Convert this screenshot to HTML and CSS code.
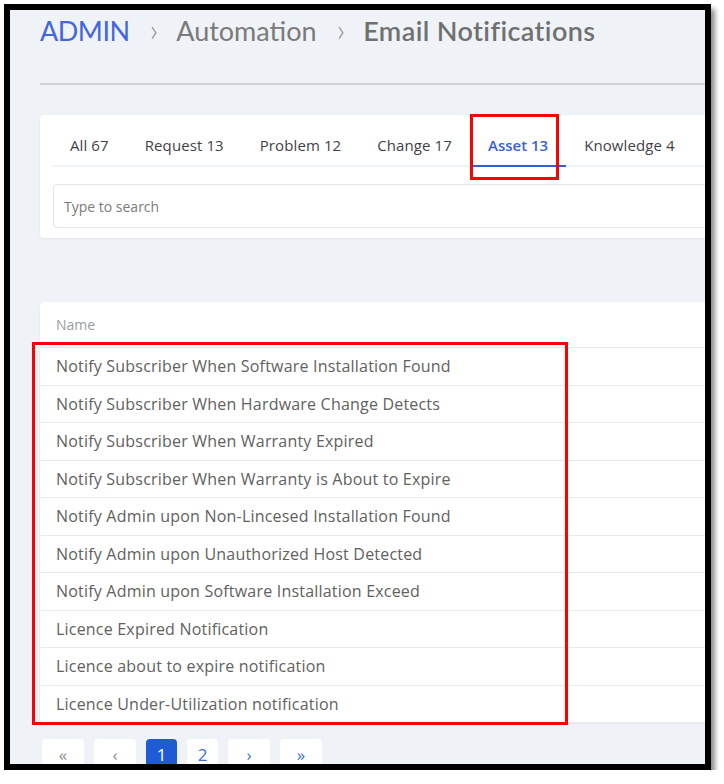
FILE: index.html
```html
<!DOCTYPE html>
<html lang="en">
  <head>
    <meta charset="UTF-8" />
    <title>Email Notifications</title>
    <link rel="stylesheet" href="styles.css">
  </head>
  <body>
    <div class="frame">
      <div class="page">
        <div class="breadcrumb">
          <span class="crumb-root">ADMIN</span>
          <span class="crumb-sep">&rsaquo;</span>
          <span class="crumb">Automation</span>
          <span class="crumb-sep">&rsaquo;</span>
          <span class="crumb crumb-current">Email Notifications</span>
        </div>
        <div class="divider"></div>

        <div class="card filter-card">
          <div class="tabs">
            <a class="tab">All 67</a>
            <a class="tab">Request 13</a>
            <a class="tab">Problem 12</a>
            <a class="tab">Change 17</a>
            <a class="tab tab-active">Asset 13</a>
            <a class="tab">Knowledge 4</a>
          </div>
          <input class="search" type="text" placeholder="Type to search" />
        </div>

        <div class="card list-card">
          <table class="list">
            <thead>
              <tr><th>Name</th></tr>
            </thead>
            <tbody>
              <tr><td>Notify Subscriber When Software Installation Found</td></tr>
              <tr><td>Notify Subscriber When Hardware Change Detects</td></tr>
              <tr><td>Notify Subscriber When Warranty Expired</td></tr>
              <tr><td>Notify Subscriber When Warranty is About to Expire</td></tr>
              <tr><td>Notify Admin upon Non-Lincesed Installation Found</td></tr>
              <tr><td>Notify Admin upon Unauthorized Host Detected</td></tr>
              <tr><td>Notify Admin upon Software Installation Exceed</td></tr>
              <tr><td>Licence Expired Notification</td></tr>
              <tr><td>Licence about to expire notification</td></tr>
              <tr><td>Licence Under-Utilization notification</td></tr>
            </tbody>
          </table>
        </div>

        <div class="pager">
          <a class="page-btn page-arrow page-muted">&laquo;</a>
          <a class="page-btn page-arrow page-muted">&lsaquo;</a>
          <a class="page-btn page-current">1</a>
          <a class="page-btn">2</a>
          <a class="page-btn page-arrow">&rsaquo;</a>
          <a class="page-btn page-arrow">&raquo;</a>
        </div>
      </div>

      <div class="mark mark-tab"></div>
      <div class="mark mark-rows"></div>
    </div>
  </body>
</html>
```

FILE: styles.css
```css
body {
  margin: 0;
  background-color: #ffffff;
  font-family: "Open Sans", sans-serif;
}
.frame {
  position: relative;
  margin: 4px 0 0 4px;
  width: 695px;
  height: 754px;
  border: 6px solid #000;
  box-shadow: 4px 5px 5px rgba(0, 0, 0, 0.45);
  background-color: #eff3f7;
  overflow: hidden;
}
.page {
  width: 690px;
  padding-left: 30px;
}
.breadcrumb {
  display: flex;
  align-items: center;
  height: 40px;
  font-family: Lato, sans-serif;
  font-size: 27px;
  color: #7a7a7a;
  white-space: nowrap;
}
.crumb-root {
  color: #4466dd;
  letter-spacing: -0.5px;
}
.crumb-sep {
  margin: -3px 18px 0 20px;
  font-size: 32px;
  font-weight: 300;
  color: #8a8a8a;
}
.crumb-current {
  font-weight: 600;
  color: #707070;
  letter-spacing: 0.4px;
}
.divider {
  height: 2px;
  margin-top: 33px;
  background-color: #cfd3d6;
}
.card {
  background-color: #fff;
  border-radius: 4px;
  box-shadow: 0 1px 3px rgba(0, 0, 0, 0.06);
}
.filter-card {
  margin-top: 30px;
  padding: 12px 13px 10px;
}
.tabs {
  display: flex;
  margin-left: -1px;
  border-bottom: 2px solid #eef3f8;
}
.tab {
  padding: 8px 18px 10px;
  line-height: 20px;
  font-size: 15px;
  letter-spacing: 0.1px;
  color: #3f3f4a;
  white-space: nowrap;
}
.tab-active {
  margin-bottom: -2px;
  border-bottom: 2px solid #2f5fd0;
  color: #3a62d6;
  font-weight: 600;
  letter-spacing: 0;
}
.search {
  display: block;
  box-sizing: border-box;
  width: 100%;
  height: 44px;
  margin-top: 17px;
  padding: 0 10px;
  border: 1px solid #e2e5e9;
  border-radius: 4px;
  font-family: inherit;
  font-size: 14px;
}
.search::placeholder {
  color: #7b7b7b;
}
.list-card {
  margin-top: 64px;
}
.list {
  width: 100%;
  border-collapse: collapse;
}
.list th {
  height: 45px;
  padding: 0 16px;
  text-align: left;
  font-weight: normal;
  font-size: 14px;
  color: #9a9ea3;
}
.list td {
  height: 36.5px;
  padding: 0 16px;
  border-top: 1px solid #e8ebee;
  font-size: 16px;
  letter-spacing: 0.2px;
  color: #616161;
}
.pager {
  display: flex;
  gap: 10px;
  margin: 17px 0 0 2px;
}
.page-btn {
  display: flex;
  align-items: center;
  justify-content: center;
  width: 31px;
  height: 30px;
  background-color: #fff;
  border-radius: 4px;
  font-size: 17px;
  color: #3d6fd9;
}
.page-arrow {
  width: 42px;
}
.page-muted {
  color: #8c8c8c;
}
.page-current {
  background-color: #1f5bd4;
  color: #fff;
}
.mark {
  position: absolute;
  border: 3px solid #ff0000;
}
.mark-tab {
  left: 460px;
  top: 104px;
  width: 83px;
  height: 60px;
}
.mark-rows {
  left: 22px;
  top: 332px;
  width: 530px;
  height: 377px;
}
```
